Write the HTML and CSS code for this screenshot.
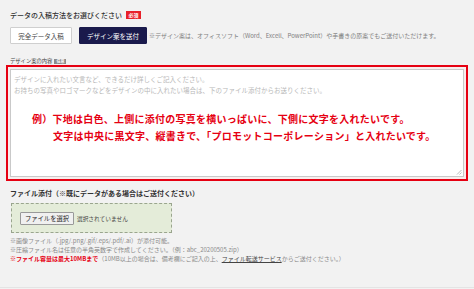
FILE: index.html
```html
<!DOCTYPE html>
<html lang="ja">
<head>
<meta charset="utf-8">
<link rel="stylesheet" href="styles.css">
</head>
<body>
<div class="page">
  <div class="sec-title">データの入稿方法をお選びください<span class="badge req">必須</span></div>
  <div class="method-row">
    <button class="btn">完全データ入稿</button>
    <button class="btn active">デザイン案を送付</button>
    <span class="hint">※デザイン案は、オフィスソフト（Word、Excell、PowerPoint）や手書きの原案でもご送付いただけます。</span>
  </div>
  <div class="field-label">デザイン案の内容<span class="badge opt">任意</span></div>
  <div class="highlight">
    <div class="textarea">
      <p class="ph">デザインに入れたい文言など、できるだけ詳しくご記入ください。</p>
      <p class="ph">お持ちの写真やロゴマークなどをデザインの中に入れたい場合は、下のファイル添付からお送りください。</p>
      <div class="annot">
        <p class="a1">例）下地は白色、上側に添付の写真を横いっぱいに、下側に文字を入れたいです。</p>
        <p class="a2">文字は中央に黒文字、縦書きで、「プロモットコーポレーション」と入れたいです。</p>
      </div>
      <svg class="grip" width="6" height="6" viewBox="0 0 6 6"><path d="M5.5 1 L1 5.5 M5.5 3.5 L3.5 5.5" stroke="#aaa" stroke-width="0.8" fill="none"/></svg>
    </div>
  </div>
  <div class="file-title">ファイル添付（※既にデータがある場合はご送付ください）</div>
  <div class="dropzone">
    <button class="file-btn">ファイルを選択</button>
    <span class="file-none">選択されていません</span>
  </div>
  <div class="notes">
    <p>※画像ファイル（.jpg/.png/.gif/.eps/.pdf/.ai）が添付可能。</p>
    <p>※圧縮ファイル名は任意の半角英数字で作成してください。（例：abc_20200505.zip）</p>
    <p><strong class="warn">※ファイル容量は最大10MBまで</strong>（10MB以上の場合は、備考欄にご記入の上、<a class="link">ファイル転送サービス</a>からご送付ください。）</p>
  </div>
  <div class="rule"></div>
</div>
</body>
</html>
```

FILE: styles.css
```css
* { box-sizing: border-box; }
body {
  margin: 0;
  background: #f2f2f2;
  font-family: "Noto Sans CJK JP", "Noto Sans", sans-serif;
  color: #333;
}
p { margin: 0; }
.page {
  padding: 10px 6px 0 10px;
}
.sec-title {
  display: flex;
  align-items: center;
  height: 10px;
  font-size: 7px;
  line-height: 10px;
  font-weight: 500;
  color: #333;
}
.badge {
  display: inline-block;
  color: #fff;
  font-weight: 700;
  text-align: center;
}
.badge.req {
  margin-left: 4px;
  width: 15px;
  height: 8px;
  line-height: 8px;
  font-size: 5px;
  background: #e8202a;
}
.method-row {
  display: flex;
  align-items: center;
  margin-top: 7px;
}
.btn {
  height: 17px;
  width: 62px;
  padding: 0;
  font-family: inherit;
  font-size: 6.5px;
  color: #444;
  background: #fff;
  border: 1px solid #cfcfcf;
  border-radius: 1px;
}
.btn.active {
  width: 68px;
  margin-left: 7px;
  background: #1a1a4c;
  border-color: #1a1a4c;
  color: #fff;
}
.hint {
  margin-left: 2px;
  font-size: 6px;
  color: #808080;
  white-space: nowrap;
}
.field-label {
  display: flex;
  align-items: center;
  margin-top: 14px;
  height: 6px;
  font-size: 5.3px;
  line-height: 6px;
  color: #444;
}
.badge.opt {
  margin-left: 2px;
  width: 12px;
  height: 5px;
  line-height: 5px;
  font-size: 4px;
  background: #8c8c8c;
}
.highlight {
  margin-top: 1px;
  margin-left: -4px;
  border: 2px solid #e60012;
  padding: 2px;
  background: #f8eded;
}
.textarea {
  position: relative;
  height: 108px;
  background: #fff;
  border: 1px solid #c9c9c9;
  padding: 4px 3px 0;
}
.ph {
  font-size: 6.5px;
  line-height: 11px;
  color: #b8b8b8;
  white-space: nowrap;
}
.annot {
  margin-top: 14px;
  color: #e60012;
  font-weight: 700;
  font-size: 10px;
  line-height: 17px;
  letter-spacing: 0.25px;
  white-space: nowrap;
}
.a1 { padding-left: 18px; }
.a2 { padding-left: 39px; }
.grip {
  position: absolute;
  right: 1px;
  bottom: 1px;
}
.file-title {
  margin-top: 8px;
  height: 8px;
  font-size: 7px;
  line-height: 8px;
  font-weight: 700;
  color: #333;
}
.dropzone {
  display: flex;
  align-items: center;
  margin-top: 6px;
  margin-left: 1px;
  width: 161px;
  height: 30px;
  padding: 0 8px;
  background: #e4ecd9;
  border: 1px dashed #9aa58e;
}
.file-btn {
  height: 13px;
  width: 54px;
  padding: 0;
  font-family: inherit;
  font-size: 6.3px;
  color: #222;
  background: #f0f0f0;
  border: 1px solid #999;
  border-radius: 1px;
}
.file-none {
  margin-left: 3px;
  font-size: 5.7px;
  color: #444;
}
.notes {
  margin-top: 3px;
  font-size: 6px;
  line-height: 9px;
  color: #8a8a8a;
  white-space: nowrap;
}
.warn {
  color: #e60012;
  font-weight: 700;
}
.link {
  color: #444;
  text-decoration: underline;
}
.rule {
  margin-top: 24px;
  margin-left: -10px;
  margin-right: -6px;
  height: 1px;
  background: #e4e4e4;
}
```
